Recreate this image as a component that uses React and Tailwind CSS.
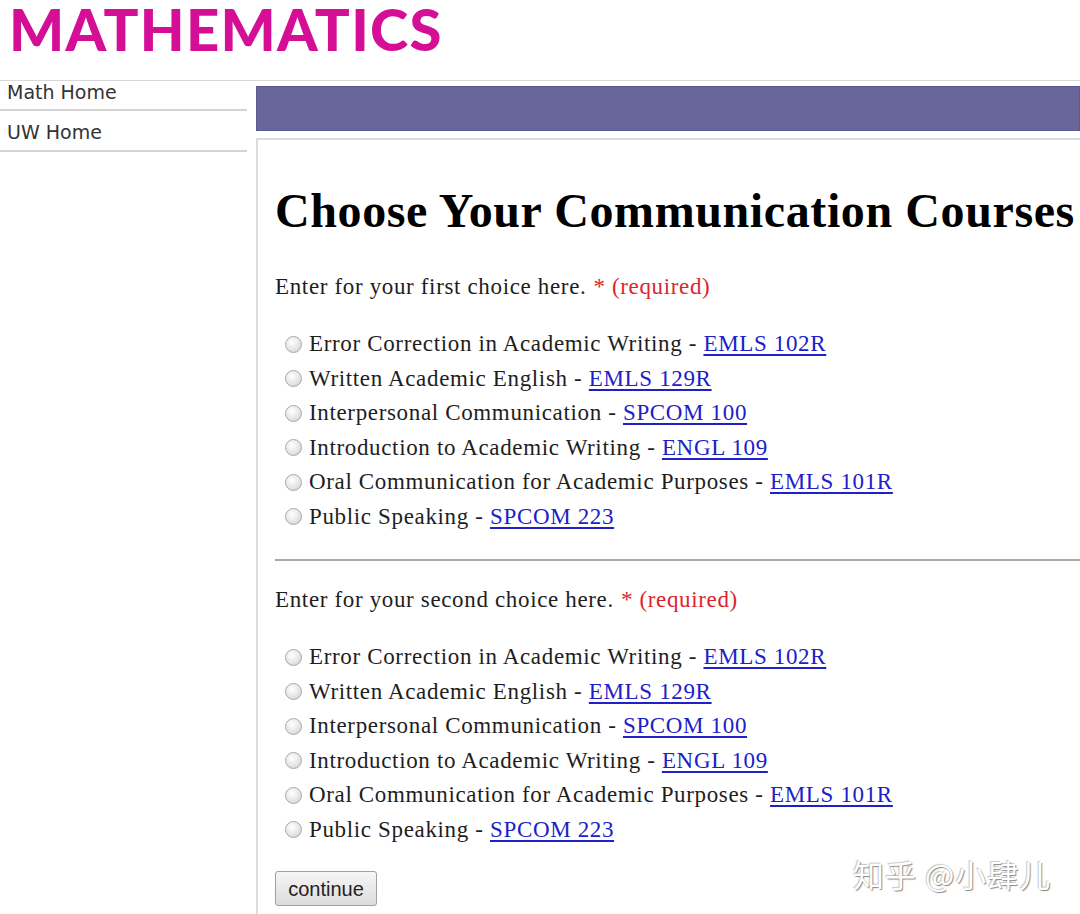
import React from "react";

const courses = [
  ["Error Correction in Academic Writing", "EMLS 102R"],
  ["Written Academic English", "EMLS 129R"],
  ["Interpersonal Communication", "SPCOM 100"],
  ["Introduction to Academic Writing", "ENGL 109"],
  ["Oral Communication for Academic Purposes", "EMLS 101R"],
  ["Public Speaking", "SPCOM 223"],
];

function Radio() {
  return (
    <span className="inline-block w-[17px] h-[17px] rounded-full border border-[#a9a9a9] bg-[radial-gradient(circle_at_40%_35%,#ffffff_0%,#e6e6e6_55%,#c8c8c8_100%)] shrink-0" />
  );
}

function CourseList() {
  return (
    <div className="flex flex-col">
      {courses.map(([name, code]) => (
        <div key={code} className="h-[34.5px] flex items-center pl-[10px]">
          <Radio />
          <span className="ml-[7px] whitespace-nowrap">
            {name} -{" "}
            <a href="#" className="text-[#2020c8] underline underline-offset-[3px] decoration-[1.5px]">
              {code}
            </a>
          </span>
        </div>
      ))}
    </div>
  );
}

function Prompt({ which }) {
  return (
    <div className="h-[34px] flex items-center whitespace-nowrap">
      Enter for your {which} choice here.{" "}
      <span className="text-[#dc2430] ml-[7px]">* (required)</span>
    </div>
  );
}

export default function App() {
  return (
    <div className="w-[1080px] h-[914px] overflow-hidden bg-white relative">
      <div className="h-[80px] pl-[9px] flex items-start">
        <div className="font-['Lato',sans-serif] font-black text-[58px] leading-[70px] mt-[-6px] tracking-[1.3px] text-[#d40f96]">
          MATHEMATICS
        </div>
      </div>
      <div className="border-t border-[#d8d8d8] flex">
        <div className="w-[247px] shrink-0 font-['DejaVu_Sans',Verdana,sans-serif] text-[19px] text-[#333]">
          <div className="h-[30px] border-b-2 border-[#d4d4d4] pl-[7px] leading-[22px]">Math Home</div>
          <div className="h-[41px] border-b-2 border-[#d4d4d4] pl-[7px] pt-[10px] leading-[22px]">UW Home</div>
        </div>
        <div className="ml-[9px] flex-1 pt-[5px] min-w-0">
          <div className="h-[45px] bg-[#67659a] border border-[#5a5890]" />
          <div className="mt-[7px] border-l-2 border-t-2 border-[#dcdcdc] h-[800px] pl-[17px] font-['Liberation_Serif','Times_New_Roman',serif] text-[23px] tracking-[0.65px] text-[#1e1e1e]">
            <h1 className="mt-[48px] h-[46px] leading-[46px] text-[48px] tracking-[0.6px] font-bold whitespace-nowrap text-black">
              Choose Your Communication Courses
            </h1>
            <div className="mt-[36px]">
              <Prompt which="first" />
            </div>
            <div className="mt-[23px]">
              <CourseList />
            </div>
            <div className="mt-[25px] h-[2px] bg-[#a8a8a8]" />
            <div className="mt-[22px]">
              <Prompt which="second" />
            </div>
            <div className="mt-[23px]">
              <CourseList />
            </div>
            <button className="mt-[24px] w-[102px] h-[35px] border border-[#a0a0a0] rounded-[3px] bg-[linear-gradient(#f6f6f6,#dcdcdc)] font-['Liberation_Sans',Arial,sans-serif] text-[20px] tracking-normal text-[#222] leading-none">
              continue
            </button>
          </div>
        </div>
      </div>
      <div className="absolute left-[853px] top-[851px] font-['Noto_Sans_CJK_SC',sans-serif] text-[31px] text-white [text-shadow:1px_1px_1px_#8a8a8a,-1px_-1px_1px_#c8c8c8] tracking-[1px]">
        知乎 @小肆儿
      </div>
    </div>
  );
}
